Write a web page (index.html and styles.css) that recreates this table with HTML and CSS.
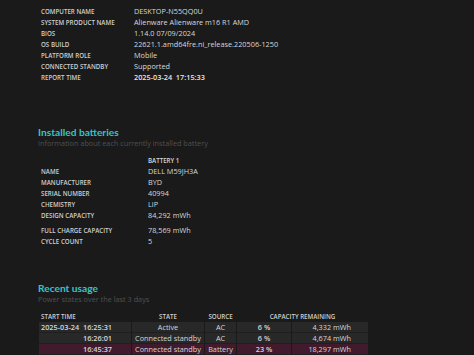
FILE: index.html
```html
<!DOCTYPE html>
<html>
<head>
<meta charset="utf-8">
<link rel="stylesheet" href="styles.css">
</head>
<body>
<div class="page">
  <table class="info">
    <tr><td class="lbl">COMPUTER NAME</td><td class="val">DESKTOP-N55QQ0U</td></tr>
    <tr><td class="lbl">SYSTEM PRODUCT NAME</td><td class="val">Alienware Alienware m16 R1 AMD</td></tr>
    <tr><td class="lbl">BIOS</td><td class="val">1.14.0 07/09/2024</td></tr>
    <tr><td class="lbl">OS BUILD</td><td class="val">22621.1.amd64fre.ni_release.220506-1250</td></tr>
    <tr><td class="lbl">PLATFORM ROLE</td><td class="val">Mobile</td></tr>
    <tr><td class="lbl">CONNECTED STANDBY</td><td class="val">Supported</td></tr>
    <tr><td class="lbl">REPORT TIME</td><td class="val strong">2025-03-24 &nbsp;17:15:33</td></tr>
  </table>

  <section class="sec batteries">
    <h2>Installed batteries</h2>
    <div class="sub">Information about each currently installed battery</div>
    <table class="info bat">
      <tr><td class="lbl"></td><td class="val head">BATTERY 1</td></tr>
      <tr><td class="lbl">NAME</td><td class="val">DELL M59JH3A</td></tr>
      <tr><td class="lbl">MANUFACTURER</td><td class="val">BYD</td></tr>
      <tr><td class="lbl">SERIAL NUMBER</td><td class="val">40994</td></tr>
      <tr><td class="lbl">CHEMISTRY</td><td class="val">LiP</td></tr>
      <tr class="gapafter"><td class="lbl">DESIGN CAPACITY</td><td class="val">84,292 mWh</td></tr>
      <tr><td class="lbl">FULL CHARGE CAPACITY</td><td class="val">78,569 mWh</td></tr>
      <tr><td class="lbl">CYCLE COUNT</td><td class="val">5</td></tr>
    </table>
  </section>

  <section class="sec usage">
    <h2>Recent usage</h2>
    <div class="sub">Power states over the last 3 days</div>
    <table class="usage-t">
      <tr class="th">
        <td class="c-time">START TIME</td>
        <td class="c-state">STATE</td>
        <td class="c-src">SOURCE</td>
        <td class="c-cap" colspan="2">CAPACITY REMAINING</td>
      </tr>
      <tr class="row ac">
        <td class="c-time"><span class="date">2025-03-24</span><span class="time">16:25:31</span></td>
        <td class="c-state">Active</td><td class="c-src">AC</td>
        <td class="c-pct">6 %</td><td class="c-mwh">4,332 mWh</td>
      </tr>
      <tr class="row ac">
        <td class="c-time"><span class="date"></span><span class="time">16:26:01</span></td>
        <td class="c-state">Connected standby</td><td class="c-src">AC</td>
        <td class="c-pct">6 %</td><td class="c-mwh">4,674 mWh</td>
      </tr>
      <tr class="row dc">
        <td class="c-time"><span class="date"></span><span class="time">16:45:37</span></td>
        <td class="c-state">Connected standby</td><td class="c-src">Battery</td>
        <td class="c-pct">23 %</td><td class="c-mwh">18,297 mWh</td>
      </tr>
    </table>
  </section>
</div>
</body>
</html>
```
FILE: styles.css
```css
html, body {
  margin: 0;
  padding: 0;
  background: #1a1a1a;
}
body {
  font-family: "Open Sans", "Noto Sans", sans-serif;
  color: #d6d6d6;
  width: 474px;
  height: 355px;
  overflow: hidden;
}
.page {
  padding: 6px 0 0 38px;
}
table {
  border-collapse: collapse;
}
.info td {
  padding: 0 0 0 3px;
  height: 11px;
  line-height: 11px;
  white-space: nowrap;
}
.info .lbl {
  width: 90px;
  font-size: 6.2px;
  font-weight: 600;
  color: #cfcfcf;
}
.info .val {
  font-size: 7.3px;
  color: #d8d8d8;
}
.info .strong {
  font-weight: 600;
  color: #e6e6e6;
}
.sec h2 {
  margin: 0;
  font-family: "Lato", "Open Sans", sans-serif;
  font-size: 10.2px;
  line-height: 12px;
  font-weight: 700;
  color: #36c4c6;
}
.sec .sub {
  font-size: 7.3px;
  line-height: 10px;
  color: #505050;
}
.batteries {
  margin-top: 43px;
}
.bat {
  margin-top: 7px;
}
.bat .lbl {
  width: 104px;
}
.bat .head {
  font-size: 6.2px;
  font-weight: 600;
}
.bat .gapafter td {
  padding-bottom: 4px;
}
.usage {
  margin-top: 35px;
}
.usage-t {
  margin-top: 7px;
  border-collapse: separate;
  border-spacing: 1px 0;
  font-size: 7.3px;
  color: #d6d6d6;
}
.usage-t td {
  height: 11px;
  line-height: 11px;
  padding: 0;
  white-space: nowrap;
}
.usage-t .th td {
  font-size: 6.2px;
  font-weight: 600;
  color: #cfcfcf;
}
.usage-t .row td {
  background: #282828;
  border-bottom: 1px solid #1f1f1f;
  height: 10px;
  line-height: 10px;
}
.usage-t .row.dc td {
  background: #421a2d;
}
.c-time { width: 90px; padding-left: 2px !important; }
.date { display: inline-block; width: 42px; font-weight: 600; }
.time { font-weight: 600; }
.c-state { width: 72px; text-align: center; }
.c-src { width: 31px; text-align: center; }
.c-pct { width: 54px; text-align: center; font-weight: 600; }
.c-mwh { width: 59px; text-align: right; padding-right: 17px !important; }
.th .c-cap { text-align: center; }
```
